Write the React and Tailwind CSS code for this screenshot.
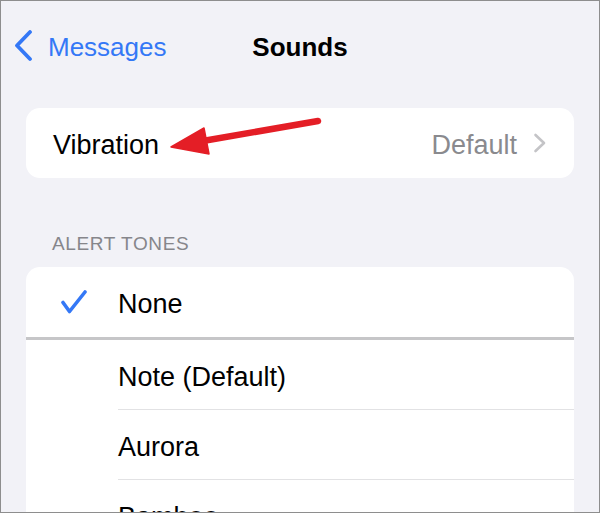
import React from 'react';

const tones = ['None', 'Note (Default)', 'Aurora', 'Bamboo', 'Chord'];

function BackChevron() {
  return (
    <svg width="20" height="32" viewBox="0 0 20 32" className="shrink-0">
      <path d="M16 2 L3 15.5 L16 29" fill="none" stroke="#3478f6" strokeWidth="3.8" strokeLinecap="round" strokeLinejoin="round" />
    </svg>
  );
}

function Check() {
  return (
    <svg width="26" height="24" viewBox="0 0 26 24">
      <path d="M2 12.5 L8.5 21.5 L24 2" fill="none" stroke="#3478f6" strokeWidth="3.6" strokeLinecap="round" strokeLinejoin="round" />
    </svg>
  );
}

function RowChevron() {
  return (
    <svg width="14" height="20" viewBox="0 0 14 20">
      <path d="M2.5 2 L11 10 L2.5 18" fill="none" stroke="#c4c4c7" strokeWidth="2.6" strokeLinecap="round" strokeLinejoin="round" />
    </svg>
  );
}

export default function App() {
  return (
    <div
      className="relative w-[600px] h-[513px] overflow-hidden border border-[#8e8e8e] bg-[#f2f2f7]"
      style={{ fontFamily: '"Liberation Sans", Arial, sans-serif' }}
    >
      {/* nav bar */}
      <header className="grid grid-cols-[1fr_auto_1fr] items-center h-[90px]">
        <div className="flex items-center gap-[14px] pl-[13px]">
          <BackChevron />
          <span className="text-[26px] text-[#3478f6] pt-[2px]">Messages</span>
        </div>
        <h1 className="text-[26px] font-bold text-black pt-[2px]">Sounds</h1>
        <div />
      </header>

      <main className="px-[25px]">
        <div className="mt-[17px] h-[70px] bg-white rounded-[14px] flex items-center pl-[27px] pr-[27px]">
          <span className="text-[27px] text-black pt-[4px]">Vibration</span>
          <span className="ml-auto text-[27px] text-[#8a8a8e] pt-[4px]">Default</span>
          <span className="ml-[16px]">
            <RowChevron />
          </span>
        </div>

        <div className="pt-[54px] pb-[11px] pl-[26px] text-[19px] leading-[24px] tracking-[0.6px] text-[#86868b]">
          ALERT TONES
        </div>

        <div className="bg-white rounded-t-[14px]">
          {tones.map((tone, i) => (
            <div key={tone}>
              <div className={'flex items-center h-[70px] ' + (i > 0 ? 'ml-[92px] border-b border-[#e2e2e4]' : '')}>
                {i === 0 && (
                  <span className="w-[92px] flex justify-center pl-[4px]">
                    <Check />
                  </span>
                )}
                <span className="text-[27px] text-black pt-[5px]">{tone}</span>
              </div>
              {i === 0 && <div className="h-[3px] bg-[#c6c6c8]" />}
            </div>
          ))}
        </div>
      </main>

      {/* red annotation arrow */}
      <svg className="absolute inset-0 pointer-events-none" width="600" height="513" viewBox="0 0 600 513">
        <line x1="317" y1="120" x2="196" y2="141" stroke="#e41e26" strokeWidth="6.5" strokeLinecap="round" />
        <polygon points="170,146 203,127 208,153" fill="#e41e26" stroke="#e41e26" strokeWidth="1.5" strokeLinejoin="round" />
      </svg>
    </div>
  );
}
